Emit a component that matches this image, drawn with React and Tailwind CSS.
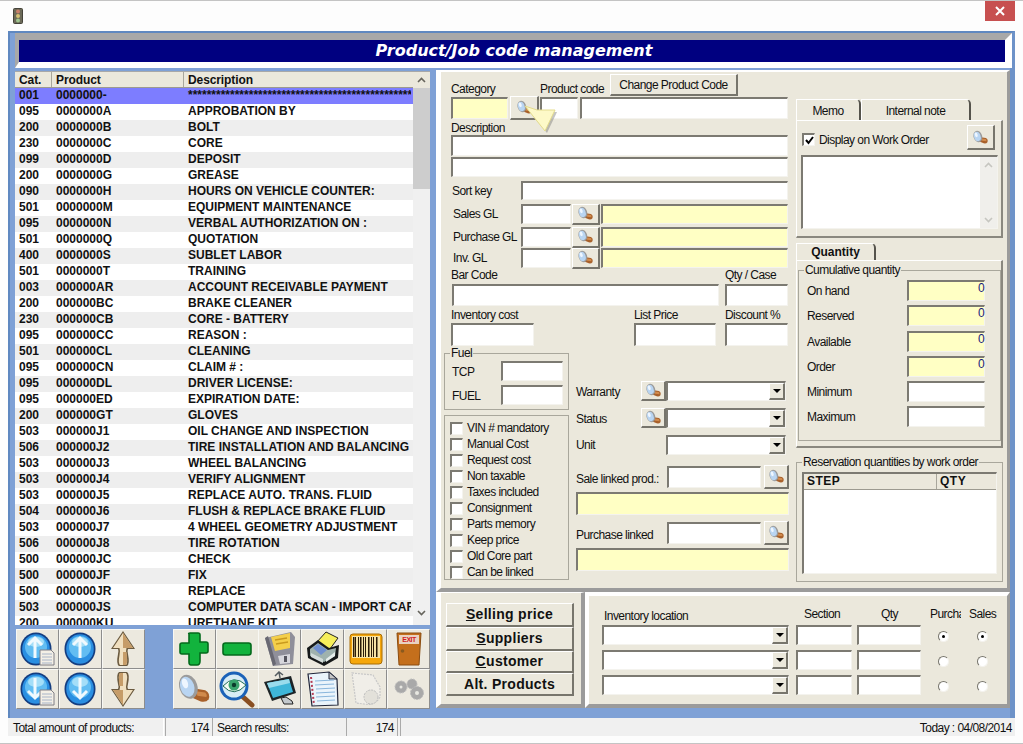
import React from "react";

const rows = [
  ["001", "0000000-", "*".repeat(70)],
  ["095", "0000000A", "APPROBATION BY"],
  ["200", "0000000B", "BOLT"],
  ["230", "0000000C", "CORE"],
  ["099", "0000000D", "DEPOSIT"],
  ["200", "0000000G", "GREASE"],
  ["090", "0000000H", "HOURS ON VEHICLE COUNTER:"],
  ["501", "0000000M", "EQUIPMENT MAINTENANCE"],
  ["095", "0000000N", "VERBAL AUTHORIZATION ON :"],
  ["501", "0000000Q", "QUOTATION"],
  ["400", "0000000S", "SUBLET LABOR"],
  ["501", "0000000T", "TRAINING"],
  ["003", "000000AR", "ACCOUNT RECEIVABLE PAYMENT"],
  ["200", "000000BC", "BRAKE CLEANER"],
  ["230", "000000CB", "CORE - BATTERY"],
  ["095", "000000CC", "REASON :"],
  ["501", "000000CL", "CLEANING"],
  ["095", "000000CN", "CLAIM # :"],
  ["095", "000000DL", "DRIVER LICENSE:"],
  ["095", "000000ED", "EXPIRATION DATE:"],
  ["200", "000000GT", "GLOVES"],
  ["503", "000000J1", "OIL CHANGE AND INSPECTION"],
  ["506", "000000J2", "TIRE INSTALLATION AND BALANCING"],
  ["503", "000000J3", "WHEEL BALANCING"],
  ["503", "000000J4", "VERIFY ALIGNMENT"],
  ["503", "000000J5", "REPLACE AUTO. TRANS. FLUID"],
  ["504", "000000J6", "FLUSH & REPLACE BRAKE FLUID"],
  ["503", "000000J7", "4 WHEEL GEOMETRY ADJUSTMENT"],
  ["506", "000000J8", "TIRE ROTATION"],
  ["500", "000000JC", "CHECK"],
  ["500", "000000JF", "FIX"],
  ["500", "000000JR", "REPLACE"],
  ["503", "000000JS", "COMPUTER DATA SCAN - IMPORT CAR"],
  ["200", "000000KU", "URETHANE KIT"],
];

const checks = [
  "VIN # mandatory",
  "Manual Cost",
  "Request cost",
  "Non taxable",
  "Taxes included",
  "Consignment",
  "Parts memory",
  "Keep price",
  "Old Core part",
  "Can be linked",
];

const sunken = "border-t-2 border-l-2 border-t-[#7c7a72] border-l-[#7c7a72] border-b border-r border-b-[#f4f3ee] border-r-[#f4f3ee]";
const raised = "border border-t-white border-l-white border-b-2 border-r-2 border-b-[#77756c] border-r-[#77756c] bg-[#ebe8dc]";

/* ---------- icons ---------- */
const SearchIcon = ({ size = 20 }) => (
  <svg width={size} height={size} viewBox="0 0 32 32">
    <path d="M14 15 L26 17 Q31 20 29 25 Q27 28 22 27 L15 24 Z" fill="#a8602a" />
    <path d="M18 18 L26 19 Q28 21 27 23 L19 22 Z" fill="#d08a4c" />
    <ellipse cx="11" cy="14" rx="8" ry="11" transform="rotate(-18 11 14)" fill="#9b9b9b" />
    <ellipse cx="10" cy="14" rx="6.2" ry="9" transform="rotate(-18 10 14)" fill="#b9d5f2" />
    <ellipse cx="8" cy="11" rx="2.6" ry="4.5" transform="rotate(-18 8 11)" fill="#eef6ff" />
  </svg>
);

const RoundArrow = ({ down, doc }) => (
  <svg width="36" height="36" viewBox="0 0 36 36">
    <ellipse cx={doc ? 16 : 18} cy="18" rx="15.5" ry="16.5" fill="#143d80" />
    <ellipse cx={doc ? 16 : 18} cy="18" rx="13.8" ry="14.8" fill="#2a8fe2" />
    <ellipse cx={doc ? 16 : 18} cy="16" rx="11" ry="11" fill="#62bdf2" />
    <ellipse cx={doc ? 16 : 18} cy="11" rx="8" ry="5" fill="#a4def8" />
    <path
      d={down ? "M0 -10 V10 M-7 3 L0 10 L7 3" : "M0 10 V-10 M-7 -3 L0 -10 L7 -3"}
      transform={`translate(${doc ? 15 : 18} 17)`}
      fill="none"
      stroke="#f0f9fe"
      strokeWidth="3"
    />
    {doc && (
      <g>
        <path d="M20 19 H31 L34 22 V34 H20 Z" fill="#f3efe6" stroke="#7f7f86" />
        <path d="M22 23 H32 M22 26 H32 M22 29 H32 M22 32 H32" stroke="#a7b4c8" />
      </g>
    )}
  </svg>
);

const TanArrow = ({ down }) => (
  <svg width="26" height="38" viewBox="0 0 26 38">
    <g transform={down ? "rotate(180 13 19)" : undefined}>
      <path d="M13 1 L25 19 H18 Q17 21 18 24 Q20 34 17 36 H9 Q6 34 8 24 Q9 21 8 19 H1 Z" fill="#6b5a3f" />
      <path d="M13 3 L23 18 H16.5 Q15.5 21 16.5 25 Q18 33 16 35 H10 Q8 33 9.5 25 Q10.5 21 9.5 18 H3 Z" fill="#f0dfbf" />
      <path d="M13 3 L23 18 H13 Z M13 22 H16.5 Q18 33 16 35 H13 Z" fill="#c69c68" />
    </g>
  </svg>
);

const PlusIcon = () => (
  <svg width="30" height="34" viewBox="0 0 30 34">
    <path d="M10 2 Q9 1 11 1 H19 Q21 1 21 3 V10 H27 Q29 10 29 12 V19 Q29 21 27 21 H21 V29 Q21 33 18 33 H12 Q10 33 10 30 V22 H3 Q1 22 1 20 V13 Q1 11 3 11 H10 Z" fill="#12b33d" stroke="#046a1c" strokeWidth="1.6" />
  </svg>
);

const MinusIcon = () => (
  <svg width="30" height="14" viewBox="0 0 30 14">
    <rect x="1" y="1" width="28" height="12" rx="2.5" fill="#12b33d" stroke="#046a1c" strokeWidth="1.6" />
  </svg>
);

const FloppyIcon = () => (
  <svg width="32" height="36" viewBox="0 0 32 36">
    <path d="M1 7 L27 1 L31 6 L29 33 L9 35 Z" fill="#8f8f9a" />
    <path d="M1 7 L4 5 L12 33 L9 35 Z" fill="#686872" />
    <path d="M7 6 L26 2 L26 17 L11 20 Z" fill="#f4cf4a" />
    <path d="M11 9 L23 7 M12 13 L24 11" stroke="#c99a1e" strokeWidth="1.4" />
    <path d="M14 25 L26 23 L26 32 L16 33 Z" fill="#d7d7dd" />
    <rect x="20" y="25" width="3" height="6" fill="#55555f" />
  </svg>
);

const PrinterIcon = () => (
  <svg width="36" height="36" viewBox="0 0 36 36">
    <path d="M11 12 L21 1 L33 7 L25 18 Z" fill="#f6ee5a" stroke="#222" />
    <path d="M2 17 L13 9 L24 17 L34 14 L33 27 L19 35 L3 27 Z" fill="#16191a" />
    <path d="M5 18 L13 12 L23 19 L31 17 L30 25 L19 31 L5 25 Z" fill="#9fb2ae" />
    <path d="M8 17 L13 13 L22 19 L16 24 Z" fill="#6f8fd0" />
    <path d="M6 22 L18 28 L18 32 L6 26 Z" fill="#d3dcda" />
    <path d="M21 28 L30 21 L30 25 L21 31 Z" fill="#e6eeec" />
  </svg>
);

const BarcodeIcon = () => (
  <svg width="34" height="32" viewBox="0 0 34 32">
    <rect x="1" y="1" width="32" height="30" rx="3" fill="#f6a70b" stroke="#a86c05" />
    <rect x="3" y="3" width="28" height="22" fill="#f7e3a5" />
    {[4, 6, 9, 11, 14, 16, 19, 22, 24, 27].map((x, i) => (
      <rect key={x} x={x} y="4" width={i % 3 === 0 ? 1.5 : 1} height="20" fill="#2a1c08" />
    ))}
  </svg>
);

const ExitIcon = () => (
  <svg width="26" height="34" viewBox="0 0 26 34">
    <path d="M1 1 H25 L23 33 H3 Z" fill="#c46f1c" stroke="#8a4c10" />
    <rect x="3" y="3" width="20" height="9" fill="#e9d2c2" />
    <text x="13" y="10" textAnchor="middle" fontSize="7" fontWeight="700" fill="#d21f1f" fontFamily="Liberation Sans, sans-serif">EXIT</text>
    <circle cx="6.5" cy="19" r="1.8" fill="#8a5a1e" />
  </svg>
);

const EyeSearchIcon = () => (
  <svg width="36" height="38" viewBox="0 0 36 38">
    <path d="M23 26 L33 35" stroke="#8a4f22" strokeWidth="5" strokeLinecap="round" />
    <circle cx="15" cy="16" r="14.5" fill="#1b62b8" />
    <circle cx="15" cy="16" r="11.5" fill="#d8ecf5" />
    <path d="M4 16 Q15 4 27 15 Q15 28 4 16 Z" fill="#f6fbf4" stroke="#1c6a55" />
    <circle cx="15" cy="15" r="5.5" fill="#3aa46d" />
    <circle cx="15" cy="15" r="2.2" fill="#0b3a2c" />
  </svg>
);

const MonitorIcon = () => (
  <svg width="34" height="36" viewBox="0 0 34 36">
    <path d="M1 11 L28 5 L33 22 L9 30 Z" fill="#1e2426" />
    <path d="M4 12 L26 8 L30 21 L10 27 Z" fill="#3fb6d8" />
    <path d="M4 12 L26 8 L27 12 L6 17 Z" fill="#9adcec" />
    <path d="M12 5 L16 1 L20 4 M16 1 L17 7" stroke="#545c60" strokeWidth="1.5" fill="none" />
    <path d="M18 27 L21 33 H30 L29 30 L23 26 Z" fill="#c4c9cc" stroke="#222" />
  </svg>
);

const DocListIcon = () => (
  <svg width="32" height="36" viewBox="0 0 32 36">
    <path d="M1 3 L22 1 L30 8 L31 34 L5 35 Z" fill="#eaf4fb" stroke="#20263a" strokeWidth="1.2" />
    <path d="M22 1 L22 8 L30 8 Z" fill="#c6c6c6" stroke="#20263a" />
    <path d="M8 10 L27 9 M8 14 L27 13 M9 18 L28 17 M9 22 L28 21 M9 26 L28 25 M10 30 L28 29" stroke="#8ab6dc" strokeWidth="1.2" />
    <path d="M4 6 L7 34" stroke="#b43c54" strokeWidth="2" strokeDasharray="2 2" />
  </svg>
);

const GhostDocIcon = () => (
  <svg width="34" height="36" viewBox="0 0 34 36">
    <path d="M3 2 L24 4 L31 16 L31 26 Q26 35 15 33 L7 32 Z" fill="#f0eee8" stroke="#c8c8c8" strokeWidth="1.2" strokeDasharray="2 1" />
    <circle cx="22" cy="26" r="7" fill="#e3e1da" stroke="#bdbdbd" strokeDasharray="2 1" />
  </svg>
);

const GhostGearsIcon = () => (
  <svg width="32" height="24" viewBox="0 0 32 24">
    <g fill="#a9a9a9" stroke="#bdbdbd" strokeDasharray="2 1">
      <circle cx="8" cy="10" r="6" />
      <circle cx="19" cy="7" r="5" />
      <circle cx="24" cy="16" r="6.5" />
    </g>
    <circle cx="24" cy="16" r="2" fill="#e8e8e2" />
    <circle cx="8" cy="10" r="1.5" fill="#e8e8e2" />
  </svg>
);

const TrafficLight = () => (
  <svg width="10" height="16" viewBox="0 0 10 16">
    <rect x="0.5" y="0.5" width="9" height="15" rx="1" fill="#6c6a58" stroke="#45433a" />
    <circle cx="5" cy="3.5" r="2" fill="#c9806a" />
    <circle cx="5" cy="8" r="2" fill="#d6c074" />
    <circle cx="5" cy="12.5" r="2" fill="#9fc58f" />
  </svg>
);

/* ---------- form controls ---------- */
const Input = ({ w, h, yellow, value, className = "" }) => (
  <div
    className={`${sunken} ${yellow ? "bg-[#ffffc4]" : "bg-white"} shrink-0 text-right text-[#1a1a80] leading-[13px] ${w} ${h} ${className}`}
  >
    {value}
  </div>
);

const LookupBtn = ({ w = "w-[28px]", h = "h-[23px]", className = "" }) => (
  <button className={`${raised} ${w} ${h} shrink-0 flex items-center justify-center ${className}`}>
    <SearchIcon size={17} />
  </button>
);

const Combo = ({ w, h }) => (
  <div className={`${sunken} bg-white shrink-0 flex justify-end ${w} ${h}`}>
    <div className={`${raised} w-[16px] h-full flex items-center justify-center`}>
      <span className="w-0 h-0 border-x-[4px] border-x-transparent border-t-[4px] border-t-black" />
    </div>
  </div>
);

const Check = ({ checked, className = "" }) => (
  <span className={`${sunken} bg-white w-[13px] h-[13px] shrink-0 flex items-center justify-center ${className}`}>
    {checked && (
      <svg width="9" height="9" viewBox="0 0 9 9">
        <path d="M1 4 L3.5 7 L8 1" stroke="#000" strokeWidth="2" fill="none" />
      </svg>
    )}
  </span>
);

const Radio = ({ on }) => (
  <span className="w-[11px] h-[11px] rounded-full bg-white border border-t-[#77756c] border-l-[#77756c] border-b-[#f4f3ee] border-r-[#f4f3ee] flex items-center justify-center">
    {on && <span className="w-[3px] h-[3px] rounded-full bg-black" />}
  </span>
);

const Group = ({ title, className = "", children }) => (
  <fieldset className={`border border-[#a9a79c] ${className}`}>
    {title && <legend className="ml-[5px] px-[1px] leading-[14px]">{title}</legend>}
    {children}
  </fieldset>
);

const Tab = ({ w, h, bold, children }) => (
  <div
    className={`${w} ${h} bg-[#ebe8dc] border-t border-l border-t-white border-l-white border-r-2 border-r-[#55534c] rounded-tr-[5px] flex items-center justify-center ${bold ? "font-bold tracking-normal" : "pt-[2px]"}`}
  >
    {children}
  </div>
);

const GlRow = ({ label, top }) => (
  <div className={`flex items-center pl-[12px] h-[20px] ${top}`}>
    <span className="w-[68px] whitespace-nowrap">{label}</span>
    <Input w="w-[50px]" h="h-[20px]" />
    <LookupBtn h="h-[21px]" className="ml-[1px]" />
    <Input w="w-[187px]" h="h-[20px]" yellow className="ml-[1px]" />
  </div>
);

const SideBtn = ({ h, children }) => (
  <button className={`${raised} w-[128px] ${h} font-bold text-[14px] tracking-[0.3px] text-[#111] flex items-center justify-center`}>
    <span>{children}</span>
  </button>
);

const ToolBtn = ({ children }) => (
  <button className="w-[43px] h-[40px] bg-[#ece9df] border-r border-b border-r-[#8d8d8d] border-b-[#8d8d8d] border-t border-l border-t-[#f8f8f4] border-l-[#f8f8f4] flex items-center justify-center">
    {children}
  </button>
);

export default function App() {
  return (
    <div
      className="w-[1023px] h-[744px] overflow-hidden bg-[#fdfdfd] flex flex-col border-t border-[#c4c4c4] text-[#111] text-[12px] tracking-[-0.55px] relative"
      style={{ fontFamily: '"Liberation Sans", Arial, sans-serif' }}
    >
      {/* title bar */}
      <div className="h-[30px] shrink-0 flex justify-between pl-[13px] pr-[8px]">
        <div className="pt-[7px]">
          <TrafficLight />
        </div>
        <div className="w-[30px] h-[20px] bg-[#c75050] flex items-center justify-center">
          <svg width="10" height="10" viewBox="0 0 10 10">
            <path d="M1 1 L9 9 M9 1 L1 9" stroke="#fff" strokeWidth="2" />
          </svg>
        </div>
      </div>

      {/* client area */}
      <div className="ml-[8px] w-[1007px] h-[687px] shrink-0 bg-[#7fa1d6] border-t-2 border-t-[#5f88c0] border-l-2 border-l-[#5f88c0] border-r-[5px] border-r-[#6d92c8] pl-[5px]">
        <div className="w-[997px] h-[35px] border-t-[7px] border-t-[#a8a8a8] border-l-4 border-l-[#a8a8a8] border-b-[6px] border-b-white border-r-[7px] border-r-white bg-[#000080] flex items-center justify-center">
          <h1
            className="ml-[4px] text-white italic font-bold text-[16px] leading-none tracking-normal"
            style={{ fontFamily: '"DejaVu Sans", Verdana, sans-serif' }}
          >
            Product/Job code management
          </h1>
        </div>

        <div className="flex mt-[2px]">
          {/* left: list + toolbar */}
          <div className="w-[415px] shrink-0 pt-[1px]">
            <div className="w-[415px] h-[554px] bg-white border-t border-t-[#a8a8a8] flex overflow-hidden">
              <div className="w-[398px] shrink-0 overflow-hidden">
                <div className="h-[16px] bg-[#ebe8dc] flex font-bold tracking-[-0.1px] leading-[16px] border-b border-b-[#9c9a90]">
                  <span className="w-[37px] pl-[4px] border-r border-r-[#a8a69c]">Cat.</span>
                  <span className="w-[132px] pl-[4px] border-r border-r-[#a8a69c]">Product</span>
                  <span className="pl-[4px]">Description</span>
                </div>
                {rows.map((r, i) => (
                  <div
                    key={r[1]}
                    className={`h-[16px] flex font-bold leading-[15px] tracking-normal whitespace-nowrap overflow-hidden ${
                      i === 0 ? "bg-[#7d7dff]" : i % 2 === 1 ? "bg-white" : "bg-[#eeeeee]"
                    }`}
                  >
                    <span className="w-[37px] pl-[4px] shrink-0">{r[0]}</span>
                    <span className="w-[132px] pl-[4px] shrink-0">{r[1]}</span>
                    <span className="w-[227px] pl-[4px] overflow-hidden">{r[2]}</span>
                  </div>
                ))}
              </div>
              {/* scrollbar */}
              <div className="w-[17px] shrink-0 bg-[#f0f0f0] flex flex-col">
                <div className="h-[16px] flex items-center justify-center bg-[#ebe8dc]">
                  <svg width="9" height="6" viewBox="0 0 9 6">
                    <path d="M1 5 L4.5 1.5 L8 5" stroke="#66645c" strokeWidth="1.6" fill="none" />
                  </svg>
                </div>
                <div className="h-[101px] bg-[#cdcdcd]" />
                <div className="flex-1" />
                <div className="h-[24px] flex items-center justify-center">
                  <svg width="9" height="6" viewBox="0 0 9 6">
                    <path d="M1 1 L4.5 4.5 L8 1" stroke="#66645c" strokeWidth="1.6" fill="none" />
                  </svg>
                </div>
              </div>
            </div>

            {/* toolbar */}
            <div className="flex mt-[4px] pl-[1px]">
              <div className="grid grid-cols-3 w-[129px]">
                <ToolBtn><RoundArrow doc /></ToolBtn>
                <ToolBtn><RoundArrow /></ToolBtn>
                <ToolBtn><TanArrow /></ToolBtn>
                <ToolBtn><RoundArrow doc down /></ToolBtn>
                <ToolBtn><RoundArrow down /></ToolBtn>
                <ToolBtn><TanArrow down /></ToolBtn>
              </div>
              <div className="grid grid-cols-6 w-[258px] ml-[28px]">
                <ToolBtn><PlusIcon /></ToolBtn>
                <ToolBtn><MinusIcon /></ToolBtn>
                <ToolBtn><FloppyIcon /></ToolBtn>
                <ToolBtn><PrinterIcon /></ToolBtn>
                <ToolBtn><BarcodeIcon /></ToolBtn>
                <ToolBtn><ExitIcon /></ToolBtn>
                <ToolBtn><SearchIcon size={36} /></ToolBtn>
                <ToolBtn><EyeSearchIcon /></ToolBtn>
                <ToolBtn><MonitorIcon /></ToolBtn>
                <ToolBtn><DocListIcon /></ToolBtn>
                <ToolBtn><GhostDocIcon /></ToolBtn>
                <ToolBtn><GhostGearsIcon /></ToolBtn>
              </div>
            </div>
          </div>

          {/* right: form */}
          <div className="ml-[6px] w-[574px] shrink-0">
            <div className="w-[574px] h-[522px] pt-[3px] border-t-2 border-t-white border-l-[5px] border-l-white border-r-[3px] border-r-[#9b9b9b] border-b-4 border-b-[#9b9b9b] bg-[#ebe8dc] flex relative">
              {/* form left column */}
              <div className="w-[349px] shrink-0">
                <div className="h-[22px] flex items-end pl-[10px]">
                  <span className="w-[89px] leading-[15px]">Category</span>
                  <span className="w-[70px] leading-[15px] whitespace-nowrap">Product code</span>
                  <button className={`${raised} w-[128px] h-[22px] mb-[1px]`}>Change Product Code</button>
                </div>
                <div className="flex pl-[10px] items-start h-[23px]">
                  <Input w="w-[57px]" h="h-[22px]" yellow />
                  <LookupBtn w="w-[29px]" h="h-[24px]" className="ml-[2px] -mt-px" />
                  <Input w="w-[38px]" h="h-[22px]" className="ml-[1px]" />
                  <Input w="w-[208px]" h="h-[22px]" className="ml-[2px]" />
                </div>
                <div className="h-[15px] pl-[10px] pt-[1px] leading-[14px]">Description</div>
                <Input w="w-[337px]" h="h-[21px]" className="ml-[10px]" />
                <Input w="w-[337px]" h="h-[20px]" className="ml-[10px] mt-[1px]" />
                <div className="flex items-center pl-[11px] mt-[4px] h-[19px]">
                  <span className="w-[69px]">Sort key</span>
                  <Input w="w-[267px]" h="h-[19px]" />
                </div>
                <GlRow label="Sales GL" top="mt-[4px]" />
                <GlRow label="Purchase GL" top="mt-[3px]" />
                <GlRow label="Inv. GL" top="mt-[1px]" />
                <div className="h-[16px] flex pl-[10px] leading-[15px]">
                  <span className="w-[274px]">Bar Code</span>
                  <span>Qty / Case</span>
                </div>
                <div className="flex pl-[11px] h-[22px]">
                  <Input w="w-[267px]" h="h-[22px]" />
                  <Input w="w-[63px]" h="h-[22px]" className="ml-[6px]" />
                </div>
                <div className="h-[17px] flex pl-[10px] pt-[1px] leading-[17px]">
                  <span className="w-[183px]">Inventory cost</span>
                  <span className="w-[91px]">List Price</span>
                  <span>Discount %</span>
                </div>
                <div className="flex pl-[10px] h-[23px]">
                  <Input w="w-[83px]" h="h-[23px]" />
                  <Input w="w-[82px]" h="h-[23px]" className="ml-[100px]" />
                  <Input w="w-[63px]" h="h-[23px]" className="ml-[9px]" />
                </div>

                <div className="flex">
                  <div className="ml-[3px] w-[125px] shrink-0">
                    <Group title="Fuel" className="h-[64px] w-[125px]">
                      <div className="flex items-center pl-[7px] h-[20px] mt-[1px]">
                        <span className="w-[49px] pt-[2px]">TCP</span>
                        <Input w="w-[62px]" h="h-[20px]" />
                      </div>
                      <div className="flex items-center pl-[7px] h-[20px] mt-[4px]">
                        <span className="w-[49px] pt-[2px]">FUEL</span>
                        <Input w="w-[62px]" h="h-[20px]" />
                      </div>
                    </Group>
                    <Group className="h-[165px] w-[125px] mt-[5px] pt-[4px] pl-[5px]">
                      {checks.map((c) => (
                        <div key={c} className="h-[16px] flex items-center">
                          <Check />
                          <span className="ml-[4px] whitespace-nowrap">{c}</span>
                        </div>
                      ))}
                    </Group>
                  </div>

                  <div className="ml-[7px] w-[214px]">
                    <div className="flex items-center h-[20px] mt-[35px]">
                      <span className="w-[65px] pt-[2px]">Warranty</span>
                      <LookupBtn w="w-[25px]" h="h-[20px]" />
                      <Combo w="w-[120px]" h="h-[20px]" />
                    </div>
                    <div className="flex items-center h-[20px] mt-[7px]">
                      <span className="w-[65px] pt-[2px]">Status</span>
                      <LookupBtn w="w-[25px]" h="h-[20px]" />
                      <Combo w="w-[120px]" h="h-[20px]" />
                    </div>
                    <div className="flex items-center h-[20px] mt-[7px]">
                      <span className="w-[90px]">Unit</span>
                      <Combo w="w-[120px]" h="h-[20px]" />
                    </div>
                    <div className="flex items-center h-[24px] mt-[10px]">
                      <span className="w-[91px] whitespace-nowrap pt-[3px]">Sale linked prod.:</span>
                      <Input w="w-[94px]" h="h-[22px]" />
                      <LookupBtn w="w-[25px]" h="h-[24px]" className="ml-[3px]" />
                    </div>
                    <Input w="w-[213px]" h="h-[23px]" yellow className="mt-[3px]" />
                    <div className="flex items-center h-[24px] mt-[6px]">
                      <span className="w-[91px] whitespace-nowrap pt-[3px]">Purchase linked</span>
                      <Input w="w-[94px]" h="h-[22px]" />
                      <LookupBtn w="w-[25px]" h="h-[24px]" className="ml-[3px]" />
                    </div>
                    <Input w="w-[213px]" h="h-[23px]" yellow className="mt-[3px]" />
                  </div>
                </div>
              </div>

              {/* form right column */}
              <div className="ml-[6px] w-[207px] shrink-0">
                <div className="flex mt-[24px] h-[21px]">
                  <Tab w="w-[65px]" h="h-[21px]">Memo</Tab>
                  <Tab w="w-[110px]" h="h-[21px]">Internal note</Tab>
                </div>
                <div className="w-[207px] h-[118px] border-t border-l border-t-white border-l-white border-r-2 border-b-2 border-r-[#8a887f] border-b-[#8a887f] px-[4px]">
                  <div className="flex items-start h-[34px] pl-[1px]">
                    <Check checked className="mt-[12px]" />
                    <span className="ml-[4px] flex-1 mt-[12px] leading-[14px]">Display on Work Order</span>
                    <LookupBtn w="w-[28px]" h="h-[25px]" className="mr-[2px] mt-[4px]" />
                  </div>
                  <div className={`${sunken} w-[197px] h-[74px] bg-white flex justify-end`}>
                    <div className="w-[17px] h-full bg-[#f0efeb] flex flex-col justify-between items-center py-[5px]">
                      <svg width="9" height="6" viewBox="0 0 9 6">
                        <path d="M1 5 L4.5 1.5 L8 5" stroke="#c6c6c0" strokeWidth="1.6" fill="none" />
                      </svg>
                      <svg width="9" height="6" viewBox="0 0 9 6">
                        <path d="M1 1 L4.5 4.5 L8 1" stroke="#c6c6c0" strokeWidth="1.6" fill="none" />
                      </svg>
                    </div>
                  </div>
                </div>

                <div className="flex mt-[5px]">
                  <Tab w="w-[80px]" h="h-[17px]" bold>Quantity</Tab>
                </div>
                <div className="w-[207px] h-[188px] border-t border-l border-t-white border-l-white border-r-2 border-b-2 border-r-[#8a887f] border-b-[#8a887f] pl-[1px]">
                  <Group title="Cumulative quantity" className="w-[203px] h-[178px] mt-[2px]">
                    {[
                      ["On hand", true, "mt-[3px]"],
                      ["Reserved", true, "mt-[4px]"],
                      ["Available", true, "mt-[5px]"],
                      ["Order", true, "mt-[4px]"],
                      ["Minimum", false, "mt-[4px]"],
                      ["Maximum", false, "mt-[4px]"],
                    ].map(([label, y, top]) => (
                      <div key={label} className={`flex items-center h-[21px] ${top}`}>
                        <span className="ml-[8px] w-[100px]">{label}</span>
                        <Input w="w-[78px]" h="h-[21px]" yellow={y} value={y ? "0" : null} />
                      </div>
                    ))}
                  </Group>
                </div>

                <Group title="Reservation quantities by work order" className="w-[207px] h-[127px] mt-[7px]">
                  <div className={`${sunken} ml-[5px] mt-[3px] w-[195px] h-[102px] bg-white`}>
                    <div className="h-[16px] flex bg-[#ebe8dc] border-b border-b-[#9c9a90] font-bold leading-[15px] tracking-[0.5px]">
                      <span className="w-[133px] pl-[3px] border-r border-r-[#a8a69c]">STEP</span>
                      <span className="pl-[3px]">QTY</span>
                    </div>
                  </div>
                </Group>
              </div>

              {/* tooltip callout pointing at the lookup button */}
              <svg className="absolute left-[80px] top-[27px]" width="40" height="36" viewBox="0 0 40 36">
                <path d="M4 7 L16 11 L34 11 L24 32 Z" fill="#6f6f68" opacity="0.4" transform="translate(2 2)" />
                <path d="M4 7 L16 11 L34 11 L24 32 Z" fill="#fdf9c8" stroke="#e4dc8e" />
              </svg>
            </div>

            {/* bottom panels */}
            <div className="flex">
              <div className="w-[149px] h-[116px] bg-[#ebe8dc] border-l-[5px] border-l-white border-t border-t-white border-r-[4px] border-r-[#9b9b9b] border-b-4 border-b-[#9b9b9b] pl-[5px] pt-[10px]">
                <SideBtn h="h-[24px]"><u>S</u>elling price</SideBtn>
                <SideBtn h="h-[24px]"><u>S</u>uppliers</SideBtn>
                <SideBtn h="h-[22px]"><u>C</u>ustomer</SideBtn>
                <SideBtn h="h-[23px]">Alt. Products</SideBtn>
              </div>
              <div className="w-[425px] h-[116px] bg-[#ebe8dc] border-l-[4px] border-l-white border-t-4 border-t-white border-r-[3px] border-r-[#9b9b9b] border-b-4 border-b-[#9b9b9b] pl-[13px]">
                <div className="flex h-[29px]">
                  <span className="w-[194px] pl-[2px] pt-[13px] leading-[15px]">Inventory location</span>
                  <span className="w-[61px] pl-[8px] pt-[11px] leading-[15px]">Section</span>
                  <span className="w-[73px] pl-[24px] pt-[11px] leading-[15px]">Qty</span>
                  <span className="w-[31px] pt-[11px] leading-[15px] overflow-hidden whitespace-nowrap">Purchase</span>
                  <span className="ml-[8px] pt-[11px] leading-[15px]">Sales</span>
                </div>
                {[0, 1, 2].map((i) => (
                  <div key={i} className="flex items-center h-[20px] mb-[5px]">
                    <Combo w="w-[187px]" h="h-[20px]" />
                    <Input w="w-[56px]" h="h-[20px]" className="ml-[7px]" />
                    <Input w="w-[64px]" h="h-[20px]" className="ml-[5px]" />
                    <span className="ml-[17px] w-[39px] pt-[2px]"><Radio on={i === 0} /></span>
                    <span className="pt-[2px]"><Radio on={i === 0} /></span>
                  </div>
                ))}
              </div>
            </div>
          </div>
        </div>
      </div>

      {/* status bar */}
      <div className="ml-[8px] w-[1007px] h-[18px] shrink-0 bg-[#f0f0f0] flex leading-[20px]">
        <span className="w-[156px] pl-[5px] border-r border-r-white">Total amount of products:</span>
        <span className="w-[48px] ml-[1px] pr-[3px] text-right border-l border-l-[#aaa] border-r border-r-[#aaa]">174</span>
        <span className="w-[132px] ml-[1px] pl-[3px]">Search results:</span>
        <span className="w-[52px] pr-[3px] text-right border-l border-l-[#aaa] border-r border-r-[#aaa]">174</span>
        <span className="flex-1 ml-[2px] pr-[3px] text-right border-l border-l-[#aaa]">Today : 04/08/2014</span>
      </div>
      <div className="mt-[7px] h-px w-full bg-[#c4c4c4]" />
    </div>
  );
}
